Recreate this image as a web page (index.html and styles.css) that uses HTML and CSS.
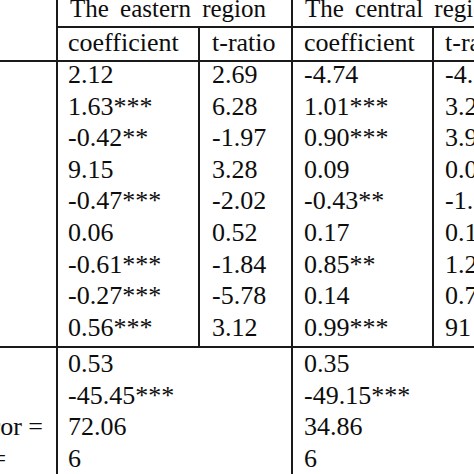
FILE: index.html
```html
<!DOCTYPE html>
<html lang="en">
<head>
<meta charset="utf-8">
<title>Regional regression results</title>
<link rel="stylesheet" href="styles.css">
</head>
<body>
<table class="tbl">
  <colgroup>
    <col class="c0"><col class="c1"><col class="c2"><col class="c3"><col class="c4">
  </colgroup>
  <thead>
    <tr class="h1">
      <th rowspan="2" class="lab vr hb">Variables</th>
      <th colspan="2" class="vr hb">The eastern region</th>
      <th colspan="2" class="hb">The central region</th>
    </tr>
    <tr class="h2">
      <th class="vr hb">coefficient</th>
      <th class="vr hb">t-ratio</th>
      <th class="vr hb">coefficient</th>
      <th class="hb">t-ratio</th>
    </tr>
  </thead>
  <tbody>
    <tr class="d"><td class="lab vr">Constant</td><td class="vr">2.12</td><td class="vr">2.69</td><td class="vr">-4.74</td><td>-4.71</td></tr>
    <tr class="d"><td class="lab vr">ln(K)</td><td class="vr">1.63***</td><td class="vr">6.28</td><td class="vr">1.01***</td><td>3.24</td></tr>
    <tr class="d"><td class="lab vr">ln(L)</td><td class="vr">-0.42**</td><td class="vr">-1.97</td><td class="vr">0.90***</td><td>3.95</td></tr>
    <tr class="d"><td class="lab vr">ln(E)</td><td class="vr">9.15</td><td class="vr">3.28</td><td class="vr">0.09</td><td>0.05</td></tr>
    <tr class="d"><td class="lab vr">ln(T)</td><td class="vr">-0.47***</td><td class="vr">-2.02</td><td class="vr">-0.43**</td><td>-1.62</td></tr>
    <tr class="d"><td class="lab vr">ln(H)</td><td class="vr">0.06</td><td class="vr">0.52</td><td class="vr">0.17</td><td>0.13</td></tr>
    <tr class="d"><td class="lab vr">ln(FDI)</td><td class="vr">-0.61***</td><td class="vr">-1.84</td><td class="vr">0.85**</td><td>1.27</td></tr>
    <tr class="d"><td class="lab vr">ln(IS)</td><td class="vr">-0.27***</td><td class="vr">-5.78</td><td class="vr">0.14</td><td>0.73</td></tr>
    <tr class="d last"><td class="lab vr hb">λ</td><td class="vr hb">0.56***</td><td class="vr hb">3.12</td><td class="vr hb">0.99***</td><td class="hb">91</td></tr>
  </tbody>
  <tbody>
    <tr class="b"><td class="lab vr">R²</td><td colspan="2" class="vr">0.53</td><td colspan="2">0.35</td></tr>
    <tr class="b"><td class="lab vr">Log likelihood</td><td colspan="2" class="vr">-45.45***</td><td colspan="2">-49.15***</td></tr>
    <tr class="b"><td class="lab vr">LM test for spatial error =</td><td colspan="2" class="vr">72.06</td><td colspan="2">34.86</td></tr>
    <tr class="b"><td class="lab vr">Degrees of freedom&#8194;=</td><td colspan="2" class="vr">6</td><td colspan="2">6</td></tr>
  </tbody>
</table>
</body>
</html>
```

FILE: styles.css
```css
html, body {
  margin: 0;
  padding: 0;
  overflow: hidden;
  background: #ffffff;
}

.tbl {
  border-collapse: separate;
  border-spacing: 0;
  table-layout: fixed;
  width: 822px;
  margin: -8px 0 0 -238px;
  font-family: "Liberation Serif", "Times New Roman", serif;
  font-size: 26px;
  line-height: 26px;
  color: #0d0d0d;
}

.c0 { width: 296px; }
.c1 { width: 142px; }
.c2 { width: 93px; }
.c3 { width: 141px; }
.c4 { width: 150px; }

.tbl th,
.tbl td {
  padding: 0 0 0 11px;
  text-align: left;
  font-weight: normal;
  white-space: nowrap;
  overflow: hidden;
  vertical-align: top;
}

.vr { border-right: 2px solid #1a1a1a; }
.hb { border-bottom: 2px solid #1a1a1a; }

.tbl .lab { padding-left: 10px; }

.h1 th {
  padding-top: 4.2px;
  padding-bottom: 3.8px;
  padding-left: 12px;
  font-size: 25px;
  word-spacing: 5px;
}

.h2 th {
  padding-top: 2.2px;
  padding-bottom: 3.8px;
}
.h2 th:nth-child(1) { padding-left: 10px; }
.h2 th:nth-child(2) { padding-left: 12px; }

.d td { padding-bottom: 5.6px; }
.d td:nth-child(2) { padding-left: 10px; }
.d td:nth-child(3) { padding-left: 12px; }

.b td {
  padding-top: 2.8px;
  padding-bottom: 2.8px;
}
.b td:nth-child(2) { padding-left: 10px; }
```
